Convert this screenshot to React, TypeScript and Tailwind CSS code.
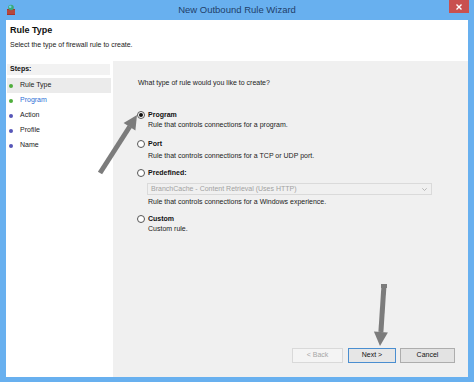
import React from "react";

const font = { fontFamily: '"Liberation Sans", Arial, sans-serif' };

function Radio({ checked }: { checked?: boolean }) {
  return (
    <div className="w-[8px] h-[8px] rounded-full border border-[#555] bg-white flex items-center justify-center shrink-0">
      {checked && <div className="w-[4px] h-[4px] rounded-full bg-[#111]" />}
    </div>
  );
}

function Option({ label, checked, children }: { label: string; checked?: boolean; children?: React.ReactNode }) {
  return (
    <div className="flex flex-col">
      <div className="flex items-center gap-[3px] h-[10px]">
        <Radio checked={checked} />
        <span className="font-bold text-[7px] leading-[10px] text-[#111]">{label}</span>
      </div>
      {children}
    </div>
  );
}

function Desc({ text, className = "" }: { text: string; className?: string }) {
  return <div className={`ml-[11px] text-[7px] leading-[10px] h-[10px] text-[#222] ${className}`}>{text}</div>;
}

function Step({ label, color, active, textColor }: { label: string; color: string; active?: boolean; textColor?: string }) {
  return (
    <div className={`h-[15px] flex items-center ml-[1px] mr-[2px] ${active ? "bg-[#ebebeb]" : ""}`}>
      <div className="w-[4px] h-[4px] rounded-full ml-[2px]" style={{ backgroundColor: color }} />
      <span className={`ml-[7px] text-[7px] ${textColor ?? "text-[#222]"}`}>{label}</span>
    </div>
  );
}

export default function App() {
  return (
    <div className="relative w-[474px] h-[382px] bg-[#68b0ef] flex flex-col overflow-hidden" style={font}>
      {/* Title bar */}
      <div className="relative h-[20px] flex items-center justify-center shrink-0">
        <svg className="absolute left-[6px] top-[4px]" width="10" height="11" viewBox="0 0 10 11">
          <rect x="1" y="5" width="8" height="6" fill="#a8322a" />
          <line x1="1" y1="7" x2="9" y2="7" stroke="#d77a6a" strokeWidth="0.6" />
          <line x1="1" y1="9" x2="9" y2="9" stroke="#d77a6a" strokeWidth="0.6" />
          <circle cx="5" cy="3.5" r="2.8" fill="#3aa87a" />
          <circle cx="4.2" cy="2.8" r="1.3" fill="#6fd0e8" />
        </svg>
        <span className="text-[9.5px] text-[#22406a]">New Outbound Rule Wizard</span>
        <div className="absolute right-[5px] top-0 w-[20px] h-[13px] bg-[#c9504f] flex items-center justify-center">
          <svg width="6" height="6" viewBox="0 0 6 6">
            <path d="M0.5 0.5 L5.5 5.5 M5.5 0.5 L0.5 5.5" stroke="#fff" strokeWidth="1.4" />
          </svg>
        </div>
      </div>

      {/* Window content */}
      <div className="mx-[6px] mb-[5px] flex-1 bg-white flex flex-col">
        {/* Header */}
        <div className="h-[41px] shrink-0 pl-[4px] pt-[5px] flex flex-col">
          <div className="font-bold text-[9px] leading-[11px] text-[#111]">Rule Type</div>
          <div className="mt-[4px] text-[7px] leading-[10px] text-[#222]">Select the type of firewall rule to create.</div>
        </div>

        {/* Body */}
        <div className="flex-1 flex">
          <div className="w-[107px] shrink-0 pt-[3px] flex flex-col">
            <div className="h-[11px] bg-[#f2f2f2] ml-[1px] mr-[3px] flex items-center pl-[3px]">
              <span className="font-bold text-[7px] text-[#111]">Steps:</span>
            </div>
            <div className="mt-[3px] flex flex-col">
              <Step label="Rule Type" color="#4fae3c" active />
              <Step label="Program" color="#4fae3c" textColor="text-[#2e6fd6]" />
              <Step label="Action" color="#5656b8" />
              <Step label="Profile" color="#5656b8" />
              <Step label="Name" color="#5656b8" />
            </div>
          </div>

          <div className="flex-1 bg-[#f0f0f0] flex flex-col pl-[24px] pr-[13px] pt-[17px] pb-[14px]">
            <div className="ml-[1px] text-[7px] leading-[9px] h-[9px] text-[#222]">What type of rule would you like to create?</div>

            <div className="mt-[23px]">
              <Option label="Program" checked>
                <Desc text="Rule that controls connections for a program." />
              </Option>
            </div>
            <div className="mt-[9px]">
              <Option label="Port">
                <Desc text="Rule that controls connections for a TCP or UDP port." className="mt-[2px]" />
              </Option>
            </div>
            <div className="mt-[7px]">
              <Option label="Predefined:">
                <div className="ml-[10px] mt-[5px] w-[285px] h-[12px] border border-[#dadada] bg-[#f0f0f0] flex items-center justify-between pl-[3px] pr-[4px]">
                  <span className="text-[7px] text-[#a2a2a2]">BranchCache - Content Retrieval (Uses HTTP)</span>
                  <svg width="5" height="3" viewBox="0 0 5 3">
                    <path d="M0.3 0.3 L2.5 2.5 L4.7 0.3" stroke="#a8a8a8" strokeWidth="0.8" fill="none" />
                  </svg>
                </div>
                <Desc text="Rule that controls connections for a Windows experience." className="mt-[2px]" />
              </Option>
            </div>
            <div className="mt-[7px]">
              <Option label="Custom">
                <Desc text="Custom rule." />
              </Option>
            </div>

            <div className="mt-auto flex justify-end items-center">
              <div className="w-[51px] h-[15px] border border-[#d9d9d9] bg-[#f4f4f4] flex items-center justify-center text-[7px] text-[#a6a6a6]">&lt; Back</div>
              <div className="ml-[5px] w-[48px] h-[15px] border border-[#4a8ed0] bg-[#e6e6e6] flex items-center justify-center text-[7px] text-[#111]">Next &gt;</div>
              <div className="ml-[4px] w-[55px] h-[15px] border border-[#adadad] bg-[#e3e3e3] flex items-center justify-center text-[7px] text-[#111]">Cancel</div>
            </div>
          </div>
        </div>
      </div>

      {/* Annotation arrows */}
      <svg className="absolute left-0 top-0 pointer-events-none" width="474" height="382" viewBox="0 0 474 382">
        <line x1="100" y1="173" x2="129.8" y2="126.5" stroke="#7c7c7c" strokeWidth="5" />
        <polygon points="137,115 135.4,130.6 123.6,123" fill="#7c7c7c" />
        <line x1="384" y1="285" x2="380.9" y2="332" stroke="#7c7c7c" strokeWidth="5" />
        <rect x="381" y="284" width="6" height="4" fill="#7c7c7c" />
        <polygon points="380,346 387.9,332.5 373.9,331.5" fill="#7c7c7c" />
      </svg>
    </div>
  );
}
